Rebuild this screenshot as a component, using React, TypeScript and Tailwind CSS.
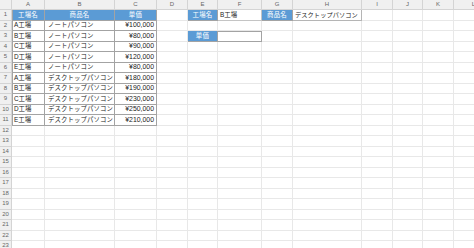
import React from "react";

const COLS = ["A", "B", "C", "D", "E", "F", "G", "H", "I", "J", "K", "L"];

const DATA: [string, string, string][] = [
  ["A工場", "ノートパソコン", "¥100,000"],
  ["B工場", "ノートパソコン", "¥80,000"],
  ["C工場", "ノートパソコン", "¥90,000"],
  ["D工場", "ノートパソコン", "¥120,000"],
  ["E工場", "ノートパソコン", "¥80,000"],
  ["A工場", "デスクトップパソコン", "¥180,000"],
  ["B工場", "デスクトップパソコン", "¥190,000"],
  ["C工場", "デスクトップパソコン", "¥230,000"],
  ["D工場", "デスクトップパソコン", "¥250,000"],
  ["E工場", "デスクトップパソコン", "¥210,000"],
];

const plain = "h-[10.5px] border-r border-b border-[#e8e8e8] bg-white";
const tbl = "h-[10.5px] border-r border-b border-[#a3a3a3] bg-white flex items-center px-[2px] text-[6.4px] text-[#222] whitespace-nowrap overflow-hidden";
const blue = "h-[10.5px] border-r border-b border-[#a3a3a3] bg-[#5b9bd5] flex items-center justify-center text-[6.4px] text-white whitespace-nowrap tracking-[0.3px]";

function Cell({ r, c }: { r: number; c: number }) {
  if (r === 1 && c <= 2) {
    const label = ["工場名", "商品名", "単価"][c];
    return <div className={c === 0 ? blue + " shadow-[inset_1px_0_0_#a3a3a3]" : blue}>{label}</div>;
  }
  if (r >= 2 && r <= 11 && c <= 2) {
    const row = DATA[r - 2];
    if (c === 0) return <div className={tbl + " shadow-[inset_1px_0_0_#a3a3a3]"}>{row[0]}</div>;
    if (c === 1) return <div className={tbl + " pl-[3px] tracking-[0.1px]"}>{row[1]}</div>;
    return <div className={tbl + " justify-end text-[6.9px]"}>{row[2]}</div>;
  }
  if (r === 1 && c === 4) return <div className={blue}>工場名</div>;
  if (r === 1 && c === 5)
    return (
      <div className="h-[10.5px] border-r border-b border-[#c4c4c4] bg-white flex items-center px-[2px] text-[6.4px] text-[#222] whitespace-nowrap">
        B工場
      </div>
    );
  if (r === 1 && c === 6) return <div className={blue}>商品名</div>;
  if (r === 1 && c === 7)
    return (
      <div className="h-[10.5px] border-r border-b border-[#b5b5b5] bg-white flex items-center px-[2px] text-[6.2px] text-[#222] whitespace-nowrap overflow-hidden tracking-[0.1px]">
        デスクトップパソコン
      </div>
    );
  if (r === 2 && (c === 4 || c === 5)) return <div className="h-[10.5px] border-r border-b border-[#e8e8e8] bg-white" />;
  if (r === 3 && c === 4) return <div className={blue}>単価</div>;
  if (r === 3 && c === 5)
    return <div className="h-[10.5px] border-r border-b border-[#a3a3a3] bg-white shadow-[inset_0_1px_0_#a3a3a3]" />;
  return <div className={plain} />;
}

export default function App() {
  const rows = Array.from({ length: 24 }, (_, i) => i + 1);
  return (
    <div
      className="w-[474px] h-[248px] overflow-hidden bg-white"
      style={{ fontFamily: '"Liberation Sans", "Noto Sans CJK JP", sans-serif' }}
    >
      <div className="grid grid-cols-[12px_33px_70px_42px_31px_30px_44px_31px_69px_31px_30px_31px_40px]">
        <div className="h-[10px] bg-[#f0f0f0] border-r border-b border-[#d4d4d4]" />
        {COLS.map((c) => (
          <div
            key={c}
            className="h-[10px] bg-[#f0f0f0] border-r border-b border-[#d4d4d4] flex items-center justify-center text-[6px] text-[#666]"
          >
            {c}
          </div>
        ))}
        {rows.map((r) => (
          <React.Fragment key={r}>
            <div className="h-[10.5px] bg-[#f0f0f0] border-r border-b border-[#d4d4d4] flex items-center justify-center text-[6px] text-[#666]">
              {r}
            </div>
            {COLS.map((_, c) => (
              <Cell key={c} r={r} c={c} />
            ))}
          </React.Fragment>
        ))}
      </div>
    </div>
  );
}
